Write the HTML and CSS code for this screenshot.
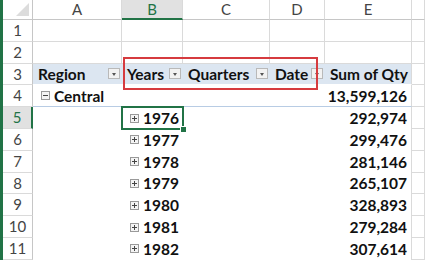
FILE: index.html
```html
<!DOCTYPE html>
<html lang="en">
<head>
    <meta charset="UTF-8">
    <title>Pivot Table</title>
    <link rel="stylesheet" href="styles.css">
</head>
<body>
    <div class="sheet">
        <div class="edge"></div>
        <div class="grid">
            <!-- column headers -->
            <div class="hd corner"></div>
            <div class="hd">A</div>
            <div class="hd active-col">B</div>
            <div class="hd">C</div>
            <div class="hd">D</div>
            <div class="hd">E</div>
            <div class="hd"></div>

            <div class="rn">1</div>
            <div class="cell"></div><div class="cell"></div><div class="cell"></div><div class="cell"></div><div class="cell"></div><div class="cell"></div>

            <div class="rn">2</div>
            <div class="cell"></div><div class="cell"></div><div class="cell"></div><div class="cell"></div><div class="cell"></div><div class="cell"></div>

            <div class="rn">3</div>
            <div class="ph">Region<span class="dd"></span></div>
            <div class="ph">Years<span class="dd"></span></div>
            <div class="ph">Quarters<span class="dd"></span></div>
            <div class="ph">Date<span class="dd"></span></div>
            <div class="ph ph-last">Sum of Qty</div>
            <div class="cell"></div>

            <div class="rn">4</div>
            <div class="pv total"><span class="tog minus"></span>Central</div>
            <div class="pv total"></div>
            <div class="pv total"></div>
            <div class="pv total"></div>
            <div class="pv total num">13,599,126</div>
            <div class="cell"></div>

            <div class="rn active-row">5</div>
            <div class="pv"></div>
            <div class="pv year sel"><span class="tog plus"></span>1976</div>
            <div class="pv"></div><div class="pv"></div>
            <div class="pv num">292,974</div>
            <div class="cell"></div>

            <div class="rn">6</div>
            <div class="pv"></div>
            <div class="pv year"><span class="tog plus"></span>1977</div>
            <div class="pv"></div><div class="pv"></div>
            <div class="pv num">299,476</div>
            <div class="cell"></div>

            <div class="rn">7</div>
            <div class="pv"></div>
            <div class="pv year"><span class="tog plus"></span>1978</div>
            <div class="pv"></div><div class="pv"></div>
            <div class="pv num">281,146</div>
            <div class="cell"></div>

            <div class="rn">8</div>
            <div class="pv"></div>
            <div class="pv year"><span class="tog plus"></span>1979</div>
            <div class="pv"></div><div class="pv"></div>
            <div class="pv num">265,107</div>
            <div class="cell"></div>

            <div class="rn">9</div>
            <div class="pv"></div>
            <div class="pv year"><span class="tog plus"></span>1980</div>
            <div class="pv"></div><div class="pv"></div>
            <div class="pv num">328,893</div>
            <div class="cell"></div>

            <div class="rn">10</div>
            <div class="pv"></div>
            <div class="pv year"><span class="tog plus"></span>1981</div>
            <div class="pv"></div><div class="pv"></div>
            <div class="pv num">279,284</div>
            <div class="cell"></div>

            <div class="rn">11</div>
            <div class="pv"></div>
            <div class="pv year"><span class="tog plus"></span>1982</div>
            <div class="pv"></div><div class="pv"></div>
            <div class="pv num">307,614</div>
            <div class="cell"></div>
        </div>

        <!-- callout around the date fields -->
        <div class="callout"></div>
    </div>
</body>
</html>
```

FILE: styles.css
```css
body {
    margin: 0;
    background: #fff;
    overflow: hidden;
    font-family: Lato, 'Liberation Sans', sans-serif;
}

.sheet {
    position: relative;
    display: flex;
    width: 425px;
    height: 260px;
}

.edge {
    width: 3px;
    background: #217346;
}

.grid {
    flex: 1;
    display: grid;
    grid-template-columns: 30px 89px 61px 87px 55px 87px 1fr;
    grid-template-rows: 20px repeat(11, 21.8px);
}

.grid > div {
    box-sizing: border-box;
    min-width: 0;
    white-space: nowrap;
}

/* headers */
.hd {
    border-right: 1px solid #dadada;
    border-bottom: 1px solid #c6c6c6;
    color: #444;
    font-size: 15px;
    text-align: center;
    line-height: 19px;
}

.corner {
    position: relative;
    border-right-color: #c6c6c6;
}

.corner::after {
    content: '';
    position: absolute;
    right: 3px;
    bottom: 3px;
    border-left: 13px solid transparent;
    border-bottom: 13px solid #dcdcdc;
}

.active-col {
    background: #e1e1e1;
    color: #217346;
    border-bottom: 2px solid #217346;
}

.rn {
    border-right: 1px solid #c6c6c6;
    border-bottom: 1px solid #dadada;
    color: #444;
    font-size: 15px;
    text-align: center;
    line-height: 21px;
}

.active-row {
    background: #e1e1e1;
    color: #217346;
    border-right: 2px solid #217346;
}

.cell {
    border-right: 1px solid #dadada;
    border-bottom: 1px solid #dadada;
}

/* pivot header row */
.ph {
    display: flex;
    align-items: center;
    justify-content: space-between;
    padding: 0 2px 0 5px;
    background: #dce6f1;
    border-bottom: 1px solid #fff;
    font-size: 15.5px;
    font-weight: 700;
    color: #111;
}

.ph-last {
    border-right: 1px solid #dadada;
}

.dd {
    position: relative;
    width: 12px;
    height: 11px;
    box-sizing: border-box;
    background: #f2f2f2;
    border: 1px solid #b9b9b9;
}

.dd::after {
    content: '';
    position: absolute;
    left: 3px;
    top: 4px;
    border-left: 2.5px solid transparent;
    border-right: 2.5px solid transparent;
    border-top: 3px solid #555;
}

/* pivot body */
.pv {
    display: flex;
    align-items: center;
    font-size: 15.5px;
    font-weight: 700;
    color: #111;
}

.total {
    border-bottom: 1px solid #b8cce4;
    padding-left: 8px;
}

.year {
    padding-left: 8px;
}

.num {
    justify-content: flex-end;
    padding-right: 4px;
    border-right: 1px solid #dadada;
}

.tog {
    position: relative;
    width: 9px;
    height: 9px;
    box-sizing: border-box;
    margin-right: 4px;
    border: 1px solid #9a9a9a;
    background: #f4f4f4;
}

.tog::before,
.tog::after {
    content: '';
    position: absolute;
    background: #444;
}

.tog::before {
    left: 1px;
    top: 3px;
    width: 5px;
    height: 1px;
}

.plus::after {
    left: 3px;
    top: 1px;
    width: 1px;
    height: 5px;
}

.minus::after {
    display: none;
}

/* selected cell */
.sel {
    position: relative;
}

.sel::before {
    content: '';
    position: absolute;
    left: -1px;
    top: -1px;
    right: -1px;
    bottom: -1px;
    border: 2px solid #217346;
}

.sel::after {
    content: '';
    position: absolute;
    right: -4px;
    bottom: -4px;
    width: 5px;
    height: 5px;
    background: #217346;
    border: 1px solid #fff;
}

.callout {
    position: absolute;
    left: 123px;
    top: 57px;
    width: 195px;
    height: 33px;
    box-sizing: border-box;
    border: 2px solid #d63b3f;
}
```
